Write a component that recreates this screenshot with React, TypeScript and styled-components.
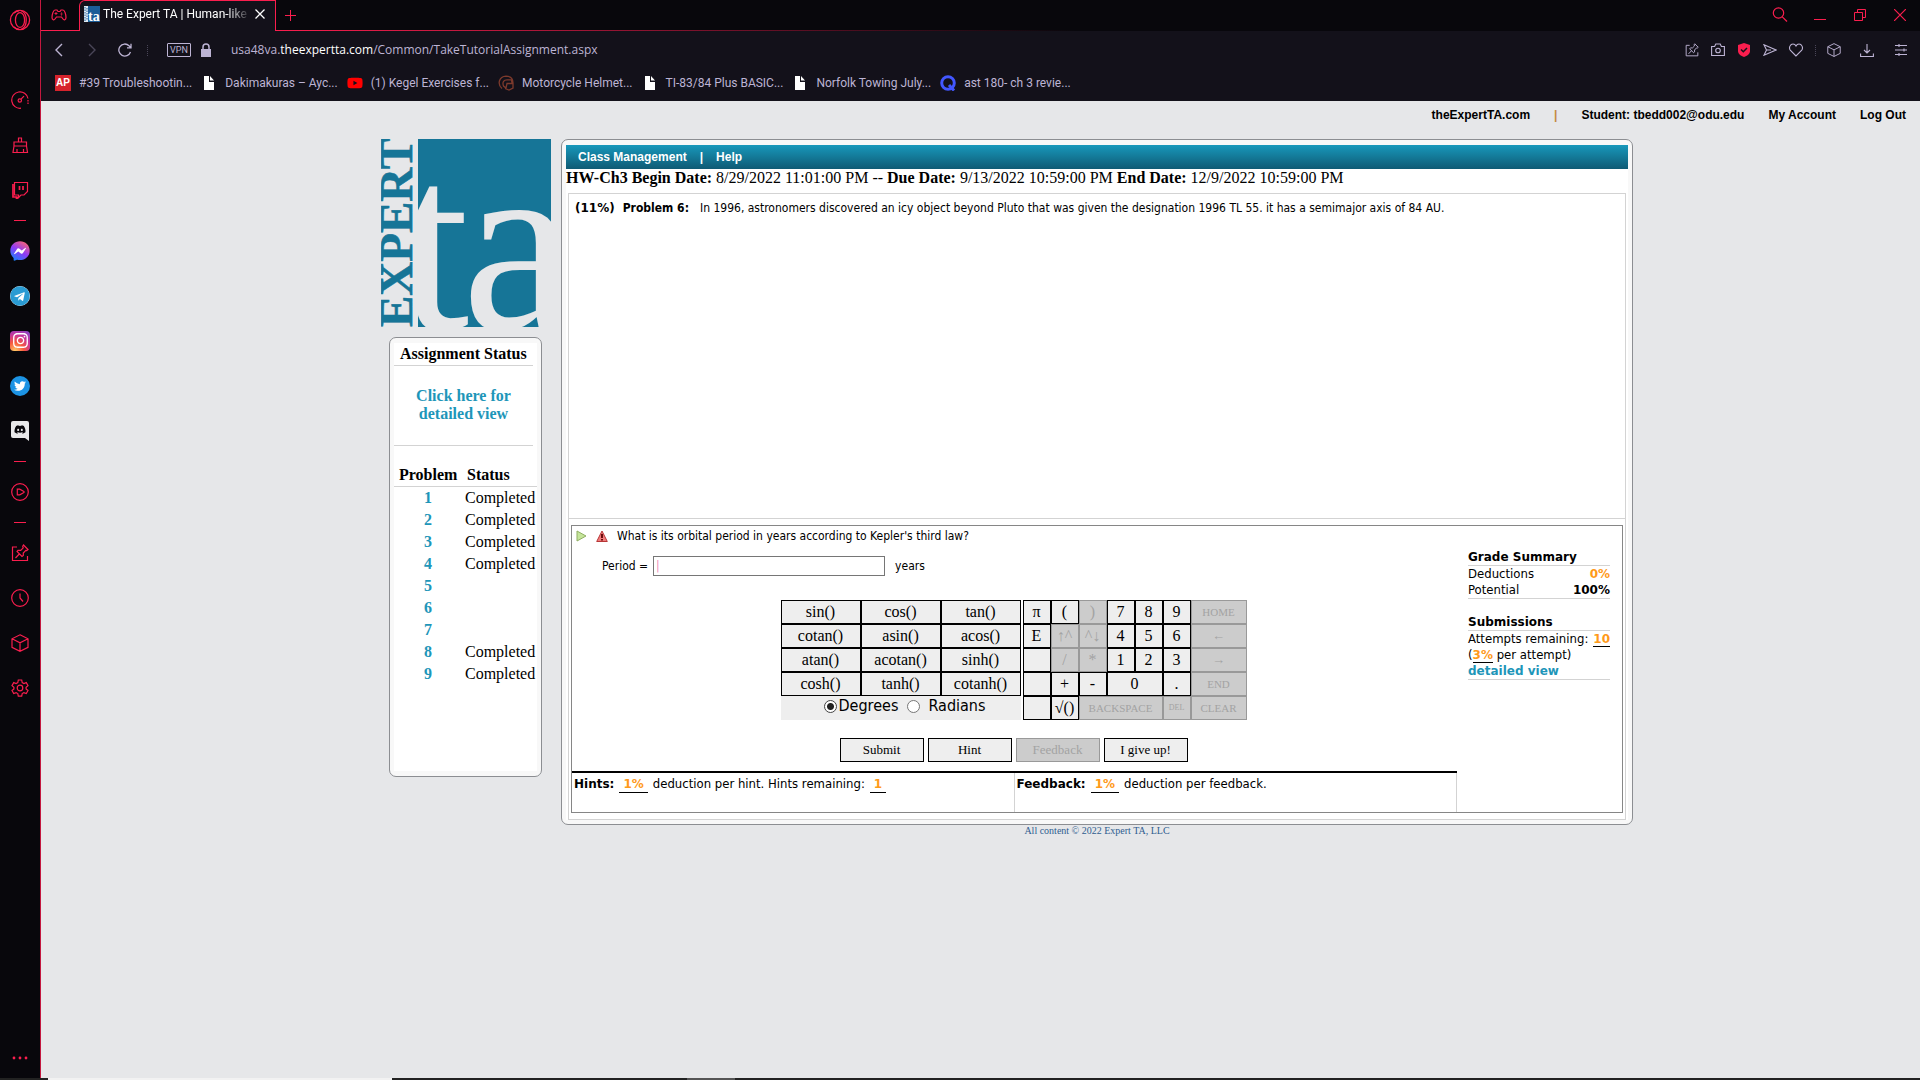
import React from "react";
import styled, { createGlobalStyle, css } from "styled-components";
import {
  FaFacebookMessenger,
  FaTelegram,
  FaTwitter,
  FaDiscord,
  FaInstagram,
  FaYoutube,
} from "react-icons/fa";

const serif = '"Liberation Serif", "Times New Roman", serif';
const arial = '"Liberation Sans", Arial, sans-serif';
const tahoma = '"DejaVu Sans Condensed", Tahoma, "DejaVu Sans", sans-serif';
const verdana = '"DejaVu Sans", Verdana, sans-serif';
const chromeFont = 'Roboto, "Segoe UI", sans-serif';
const addressFont = '"Open Sans", "Segoe UI", sans-serif';

const red = "#fa1e4e";
const lilac = "#bdb4d4";
const pageGray = "#e6e7e9";
const teal = "#1e96b9";
const orange = "#ff9a1a";
const rule = "#d3d3d3";

const GlobalStyle = createGlobalStyle`
  * { box-sizing: border-box; }
  html, body { margin: 0; background: ${pageGray}; }
  button, input { font: inherit; color: inherit; margin: 0; }
  a { text-decoration: none; color: inherit; }
`;

/* ---------- browser shell ---------- */

const Shell = styled.div`
  display: flex;
  flex-direction: column;
  min-height: 100vh;
`;
const Window = styled.div`
  display: flex;
  flex: 1;
`;
const SideBar = styled.nav`
  display: flex;
  flex-direction: column;
  align-items: center;
  width: 41px;
  flex: none;
  background: #08070c;
  border-right: 1px solid #c4183f;
  color: ${red};
  padding-top: 4px;
`;
const IconButton = styled.button<{ $w?: number; $h?: number }>`
  display: flex;
  align-items: center;
  justify-content: center;
  width: ${(p) => p.$w ?? 32}px;
  height: ${(p) => p.$h ?? 32}px;
  flex: none;
  padding: 0;
  border: 0;
  background: none;
  color: inherit;
`;
const SideGroup = styled.div`
  display: flex;
  flex-direction: column;
  align-items: center;
`;
const TopGap = styled.div`
  height: 41px;
`;
const Dash = styled.hr`
  width: 12px;
  height: 1px;
  margin: 8px 0 7px;
  border: 0;
  background: ${red};
`;
const SideEnd = styled.div`
  margin-top: auto;
  padding-bottom: 4px;
`;
const Column = styled.div`
  display: flex;
  flex-direction: column;
  flex: 1;
  min-width: 0;
`;
const TabStrip = styled.header`
  display: flex;
  align-items: stretch;
  height: 31px;
  background: #08070c;
  color: ${red};
`;
const StripLine = styled.div<{ $grow?: boolean; $w?: number }>`
  display: flex;
  align-items: center;
  ${(p) => (p.$grow ? "flex: 1;" : `width: ${p.$w}px;`)}
  border-bottom: 1px solid ${red};
  ${(p) =>
    p.$grow &&
    css`
      border-image: linear-gradient(to right, ${red}, rgba(250, 30, 78, 0) 800px) 1;
    `}
`;
const Tab = styled.div`
  display: flex;
  align-items: center;
  width: 197px;
  padding: 0 6px 4px 4px;
  background: #13111a;
  border: 1px solid ${red};
  border-bottom: 0;
  border-top-left-radius: 6px;
  color: #fff;
`;
const TabTitle = styled.span`
  flex: 1;
  margin-left: 3px;
  overflow: hidden;
  white-space: nowrap;
  font: 12px/16px ${chromeFont};
  -webkit-mask-image: linear-gradient(to right, #000 84%, transparent);
  mask-image: linear-gradient(to right, #000 84%, transparent);
`;
const WindowButtons = styled.div`
  display: flex;
  gap: 8px;
  margin-left: auto;
  padding-right: 4px;
`;
const NavBar = styled.div`
  display: flex;
  align-items: center;
  height: 38px;
  background: #13111a;
  color: ${lilac};
  padding: 0 5px 0 1px;
`;
const Dots = styled.span`
  width: 1px;
  height: 11px;
  margin: 0 5px 0 6px;
  border-left: 1px dotted #4a4658;
`;
const Vpn = styled.button`
  width: 24px;
  height: 14px;
  padding: 0;
  margin: 0 9px 0 14px;
  border: 1px solid ${lilac};
  border-radius: 1px;
  background: none;
  font: 9px/12px ${chromeFont};
  color: ${lilac};
`;
const Address = styled.span`
  flex: 1;
  margin-left: 19px;
  font: 12px/18px ${addressFont};
  b {
    font-weight: 400;
    color: #fff;
  }
`;
const Bookmarks = styled.nav`
  display: flex;
  align-items: center;
  gap: 9px;
  height: 32px;
  padding: 0 0 4px 14px;
  background: #13111a;
  color: ${lilac};
  font: 12px/16px ${chromeFont};
`;
const Bookmark = styled.a`
  display: flex;
  align-items: center;
  gap: 8px;
  white-space: nowrap;
`;
const ApBadge = styled.span`
  width: 16px;
  height: 16px;
  background: #d6232c;
  color: #fff;
  text-align: center;
  font: bold 10px/16px ${arial};
`;
const TaskBar = styled.footer`
  display: flex;
  height: 2px;
  background: #222;
`;
const TaskPart = styled.span<{ $w: number; $bg: string }>`
  width: ${(p) => p.$w}px;
  background: ${(p) => p.$bg};
`;

/* ---------- site ---------- */

const Site = styled.div`
  flex: 1;
  background: ${pageGray};
`;
const UserLinks = styled.nav`
  display: flex;
  justify-content: flex-end;
  gap: 24px;
  padding: 6px 14px 0 0;
  font: bold 12px/16px ${arial};
  color: #000;
`;
const Bar = styled.span`
  color: #c48a3c;
`;
const Page = styled.div`
  display: flex;
  align-items: flex-start;
  max-width: 1305px;
  margin: 16px auto 0;
  padding-left: 53px;
`;
const Left = styled.aside`
  width: 180px;
  flex: none;
`;
const Logo = styled.svg`
  display: block;
  width: 170px;
  height: 188px;
`;
const StatusCard = styled.section`
  width: 153px;
  min-height: 440px;
  margin: 10px 0 0 8px;
  padding: 5px 4px;
  border: 1px solid #8c8e92;
  border-radius: 7px;
  background: #f8f8f8;
  font: 16px/18px ${serif};
  color: #000;
`;
const CardBody = styled.div`
  min-height: 428px;
  background: #fff;
`;
const CardTitle = styled.h2`
  margin: 0 4px 0 0;
  padding: 2px 0 2px 6px;
  border-bottom: 1px solid ${rule};
  font-size: 16px;
  line-height: 18px;
`;
const DetailLink = styled.a`
  display: block;
  margin-right: 4px;
  padding: 21px 16px 22px;
  border-bottom: 1px solid ${rule};
  text-align: center;
  font-weight: bold;
  color: ${teal};
`;
const StatusTable = styled.table`
  width: 100%;
  margin-top: 20px;
  border-collapse: collapse;
  th {
    padding: 0 0 2px 5px;
    text-align: left;
    border-bottom: 1px solid ${rule};
  }
  td {
    height: 22px;
    padding: 0 0 0 3px;
  }
  td:first-child {
    width: 68px;
    padding-left: 0;
    text-align: center;
    font-weight: bold;
    color: ${teal};
  }
`;
const Right = styled.main`
  flex: 1;
  min-width: 0;
`;
const Panel = styled.div`
  padding: 5px 4px 4px;
  border: 1px solid #8c8e92;
  border-radius: 7px;
  background: #f8f8f8;
  color: #000;
`;
const PanelBody = styled.div`
  background: #fff;
`;
const Menu = styled.nav`
  display: flex;
  gap: 13px;
  height: 24px;
  padding-left: 12px;
  background: linear-gradient(#1898bb, #0f5a74);
  color: #fff;
  font: bold 12px/24px ${arial};
`;
const Dates = styled.p`
  margin: 0;
  font: 16px/18px ${serif};
`;
const Work = styled.div`
  margin: 6px 2px 0;
  padding-bottom: 6px;
  border: 1px solid ${rule};
`;
const Problem = styled.section`
  display: flex;
  gap: 8px;
  min-height: 325px;
  padding: 6px;
  border-bottom: 1px solid ${rule};
  font: 12px/16px ${tahoma};
`;
const Strong = styled.b<{ $wide?: boolean }>`
  ${(p) => p.$wide && `font-family: ${verdana};`}
`;
const Statement = styled.span`
  margin-left: 3px;
`;
const Question = styled.section`
  display: flex;
  margin: 6px 2px 0;
  border: 1px solid #868686;
  font: 12px/16px ${tahoma};
`;
const Answer = styled.div`
  display: flex;
  flex-direction: column;
  flex: 1;
  min-width: 0;
`;
const Ask = styled.div`
  display: flex;
  align-items: center;
  gap: 9px;
  padding: 2px 0 0 4px;
`;
const Field = styled.div`
  display: flex;
  align-items: center;
  padding: 12px 0 0 30px;
  input {
    width: 232px;
    height: 20px;
    margin: 0 10px 0 5px;
    padding: 0 2px;
    border: 1px solid #767676;
    background: #fff;
  }
  input::placeholder {
    color: #f08ab8;
    opacity: 1;
  }
`;
const Keypad = styled.div`
  display: flex;
  justify-content: center;
  gap: 2px;
  margin-top: 24px;
  padding-right: 2px;
`;
const Functions = styled.div`
  display: grid;
  grid-template-columns: repeat(3, 80px);
  grid-auto-rows: 24px;
  background: #eee;
`;
const Digits = styled.div`
  display: grid;
  grid-template-columns: repeat(6, 28px) 56px;
  grid-auto-rows: 24px;
`;
const Key = styled.button<{ $span?: number; $size?: number }>`
  padding: 0;
  grid-column: span ${(p) => p.$span ?? 1};
  border: 1px solid #000;
  background: #eee;
  font: ${(p) => p.$size ?? 16}px/20px ${serif};
  color: #000;
  &:disabled {
    border-color: #999;
    background: #ccc;
    color: #a3a3a3;
  }
`;
const Units = styled.div`
  grid-column: span 3;
  display: flex;
  justify-content: center;
  align-items: flex-start;
  gap: 9px;
  padding-left: 8px;
  font: 16px/20px ${tahoma};
  label {
    display: flex;
    align-items: center;
    gap: 2px;
  }
  label + label {
    gap: 8px;
  }
`;
const Radio = styled.input`
  appearance: none;
  width: 13px;
  height: 13px;
  border: 1px solid #767676;
  border-radius: 50%;
  background: #fff;
  &:checked {
    border-color: #444;
    background: radial-gradient(circle, #222 0 3px, #fff 4px);
  }
`;
const Actions = styled.div`
  display: flex;
  justify-content: center;
  gap: 4px;
  margin: 18px 0 9px;
  padding-right: 2px;
`;
const Action = styled(Key)`
  width: 84px;
  height: 24px;
  font-size: 13px;
`;
const Deductions = styled.div`
  display: flex;
  height: 41px;
  border-top: 2px solid #000;
  font: 13px/16px ${tahoma};
`;
const Deduction = styled.div`
  flex: 1;
  padding: 3px 0 0 2px;
  border-right: 1px solid ${rule};
  white-space: nowrap;
  b {
    font-family: ${verdana};
    font-size: 12px;
  }
`;
const Blank = styled.b`
  display: inline-block;
  height: 17px;
  margin: 0 5px;
  padding: 0 4px;
  border-bottom: 1px solid #000;
  color: ${orange};
`;
const Summary = styled.aside`
  width: 165px;
  flex: none;
  padding: 23px 12px 0 11px;
  font: 13px/16px ${tahoma};
`;
const SummaryBlock = styled.section`
  margin-bottom: 15px;
  border-bottom: 1px solid ${rule};
  h3 {
    margin: 0;
    font: bold 12px/16px ${verdana};
    border-bottom: 1px solid ${rule};
  }
`;
const SummaryRow = styled.div`
  display: flex;
  justify-content: space-between;
  height: 16px;
  white-space: nowrap;
`;
const Inline = styled.b`
  border-bottom: 1px solid #000;
  font: bold 12px/16px ${verdana};
  color: ${orange};
`;
const Percent = styled.b<{ $hot?: boolean }>`
  font: bold 12px/16px ${verdana};
  color: ${(p) => (p.$hot ? orange : "#000")};
`;
const AttemptCost = styled.div`
  height: 16px;
`;
const DetailedView = styled.a`
  display: block;
  font: bold 12px/16px ${verdana};
  color: ${teal};
`;
const Copyright = styled.p`
  margin: 0;
  text-align: center;
  font: 10px/12px ${serif};
  color: #2f5d90;
`;

/* ---------- icons ---------- */

type IconProps = { size?: number; children?: React.ReactNode; sw?: number };
const Line = ({ size = 18, sw = 1.2, children }: IconProps) => (
  <svg width={size} height={size} viewBox="0 0 18 18" fill="none" stroke="currentColor" strokeWidth={sw}>
    {children}
  </svg>
);
const OperaIcon = () => (
  <svg width="22" height="22" viewBox="0 0 22 22" fill="none" stroke="currentColor" strokeWidth="1.3">
    <circle cx="11" cy="11" r="9.6" />
    <ellipse cx="11" cy="11" rx="4.6" ry="7.4" />
    <path d="M12 1.5c7 3 7 16 0 19M10 1.5c-3 .6-4 1.4-5 2.7M10 20.500c-3-.6-4-1.400-5-2.700" />
  </svg>
);
const Gamepad = () => (
  <svg width="16" height="12" viewBox="0 0 16 12" fill="none" stroke="currentColor" strokeWidth="1.200">
    <path d="M4 1h2l1 1.500h2L10 1h2c1.500 0 3 4 3 7.500C15 11 13 11.500 12 10L10.500 8h-5L4 10C3 11.500 1 11 1 8.500 1 5 2.500 1 4 1z" />
    <path d="M3.500 4.500h3M5 3v3M10.500 3.500v1M10.500 5.500v1M9.500 5h2" strokeWidth=".9" />
  </svg>
);
const Gauge = () => (
  <Line>
    <path d="M10 17.200A8.200 8.200 0 1 1 17 7.500" />
    <path d="M17 9v5" strokeDasharray="1.500 1" />
    <circle cx="8.800" cy="9.500" r="1.700" />
    <path d="M10 8.200l3-3" />
  </Line>
);
const Broom = () => (
  <Line>
    <path d="M7.500 6V2h3v4M3 6h12.500v4H3zM3 10l-1 6.500h14.500L15.500 10M6 16.500V13M12.500 16.500V13" />
  </Line>
);
const Twitch = () => (
  <Line>
    <path d="M3.500 1.500h13v9l-3.500 3.500h-3l-2.500 2.500V14h-4z" />
    <path d="M2 3v13h3.500v2L8 15.500M8.500 5v4M12 5v4" strokeWidth="1.700" />
  </Line>
);
const PlayCircle = () => (
  <Line>
    <circle cx="9" cy="9" r="8.300" />
    <path d="M6.300 6.200v5.600h2.500L13 9.500V8.500L8.800 6.200z" />
  </Line>
);
const PinBoard = ({ size = 18 }: IconProps) => (
  <Line size={size}>
    <path d="M6 3H1.500v13.500h15V12" />
    <path d="M12.500 1l4.500 4.500-1.200 1-1-.2-2.500 2.700v2.500l-1.300 1L6 7.500l1-1.200h2.700l2.500-2.500-.500-1.500zM8.300 10L4.500 14" />
  </Line>
);
const Clock = () => (
  <Line>
    <circle cx="9" cy="9" r="8.300" />
    <path d="M9 4.500V9l3 3.500" />
  </Line>
);
const Cube = ({ size = 18 }: IconProps) => (
  <Line size={size}>
    <path d="M9 .8l8 4v8.500l-8 4-8-4V4.800zM1 4.800l8 4 8-4M9 8.800v8.500" />
  </Line>
);
const Gear = () => (
  <Line>
    <path d="M7.300 1h3.400l.5 2.500 1.700 1 2.400-.900 1.700 3-1.900 1.600v1.700l1.900 1.600-1.700 3-2.400-.900-1.700 1-.5 2.500H7.300l-.5-2.500-1.700-1-2.400.900-1.700-3 1.900-1.600V8.200L1 6.600l1.700-3 2.400.900 1.700-1z" />
    <circle cx="9" cy="9" r="2.800" />
  </Line>
);
const Messenger = () => (
  <svg width="20" height="20" viewBox="0 0 20 20">
    <defs>
      <linearGradient id="msg" x1="0.2" y1="1" x2="0.8" y2="0">
        <stop offset="0" stopColor="#1684ff" />
        <stop offset=".5" stopColor="#8f3af5" />
        <stop offset="1" stopColor="#ff6670" />
      </linearGradient>
    </defs>
    <FaFacebookMessenger size={20} style={{ fill: "url(#msg)" }} />
  </svg>
);
const MessengerFace = styled.span`
  display: flex;
  border-radius: 50%;
  background: radial-gradient(circle, #fff 7px, transparent 8px);
`;
const Badge = styled.span<{ $bg: string; $r: string }>`
  display: flex;
  align-items: center;
  justify-content: center;
  width: 20px;
  height: 20px;
  border-radius: ${(p) => p.$r};
  background: ${(p) => p.$bg};
`;
const Discord = () => (
  <svg width="18" height="20" viewBox="0 0 18 20">
    <path d="M2 0h14a2 2 0 0 1 2 2v18l-4-3H2a2 2 0 0 1-2-2V2a2 2 0 0 1 2-2z" fill="#e8e8ea" />
    <FaDiscord x="3" y="2.500" size={12} color="#08070c" />
  </svg>
);
const PageIcon = () => (
  <svg width="16" height="16" viewBox="0 0 16 16" fill="#fff">
    <path d="M3 1h5v6h5v8H3z" />
    <path d="M9 1L13 5.500H9z" />
  </svg>
);
const Helmet = () => (
  <svg width="16" height="16" viewBox="0 0 16 16" fill="none" stroke="#7d3a2c" strokeWidth="1.300">
    <path d="M4 13.500C-1 9 1 1.500 8 1.200c5 0 7 3 7 6.800v5l-4 2-4-1.500M5.500 11C4 7 6 4.800 9 4.800h4.500L14 8.500H9L8 13z" />
  </svg>
);
const Quizlet = () => (
  <svg width="16" height="16" viewBox="0 0 16 16" fill="none" stroke="#4257ff" strokeWidth="3">
    <circle cx="8" cy="8" r="6.300" />
    <path d="M9 10l5 5.500" />
  </svg>
);
const Favicon = () => (
  <svg width="16" height="16" viewBox="0 0 16 16">
    <rect width="16" height="16" fill="#1c5c97" />
    <rect width="4" height="16" fill="#dfe8f0" />
    <path d="M1 1v14M3 2v12" stroke="#1c5c97" strokeDasharray="1.500 1" />
    <text x="4" y="15" fontFamily="Liberation Serif" fontWeight="bold" fontSize="14" fill="#fff">ta</text>
  </svg>
);
const ExpertLogo = () => (
  <Logo viewBox="0 0 170 188" role="img" aria-label="Expert TA">
    <rect x="37" width="133" height="188" fill="#167597" />
    <g fontFamily="Liberation Serif" fontSize="253" fill={pageGray}>
      <text x="18" y="190">t</text>
      <text x="81" y="190">a</text>
    </g>
    <text
      transform="translate(31 188) rotate(-90)"
      fontFamily="Liberation Serif"
      fontWeight="bold"
      fontSize="47"
      fill="#167597"
      stroke="#167597"
      strokeWidth=".6"
    >
      EXPERT
    </text>
  </Logo>
);
const GreenPlay = () => (
  <svg width="11" height="12" viewBox="0 0 11 12">
    <path d="M1 1l9 5-9 5z" fill="#c5e59a" stroke="#8fae62" strokeLinejoin="round" />
  </svg>
);
const Warning = () => (
  <svg width="12" height="13" viewBox="0 0 12 13">
    <path d="M6 1l5.300 10.500H.7z" fill="#f07b7b" stroke="#b73636" strokeLinejoin="round" />
    <path d="M6 4v4M6 9v1.500" stroke="#5c0000" strokeWidth="1.800" />
  </svg>
);

/* ---------- data ---------- */

const bookmarks: [React.ReactNode, string][] = [
  [<ApBadge key="i">AP</ApBadge>, "#39 Troubleshootin..."],
  [<PageIcon key="i" />, "Dakimakuras – Ayc..."],
  [<FaYoutube key="i" size={16} color="#f00" />, "(1) Kegel Exercises f..."],
  [<Helmet key="i" />, "Motorcycle Helmet..."],
  [<PageIcon key="i" />, "TI-83/84 Plus BASIC..."],
  [<PageIcon key="i" />, "Norfolk Towing July..."],
  [<Quizlet key="i" />, "ast 180- ch 3 revie..."],
];
const statuses = [1, 1, 1, 1, 0, 0, 0, 1, 1];
const functions = [
  "sin()", "cos()", "tan()", "cotan()", "asin()", "acos()",
  "atan()", "acotan()", "sinh()", "cosh()", "tanh()", "cotanh()",
];
type K = { t: string; off?: boolean; span?: number; size?: number };
const on = (t: string, span = 1): K => ({ t, span });
const off = (t: string, size = 16, span = 1): K => ({ t, off: true, size, span });
const keys: K[] = [
  on("π"), on("("), off(")"), on("7"), on("8"), on("9"), off("HOME", 11),
  on("E"), off("↑^"), off("^↓"), on("4"), on("5"), on("6"), off("←", 13),
  on(""), off("/"), off("*"), on("1"), on("2"), on("3"), off("→", 13),
  on(""), on("+"), on("-"), on("0", 2), on("."), off("END", 11),
  on(""), on("√()"), off("BACKSPACE", 11, 3), off("DEL", 8), off("CLEAR", 11),
];

export default function App() {
  return (
    <Shell>
      <GlobalStyle />
      <Window>
        <SideBar>
          <IconButton aria-label="Opera"><OperaIcon /></IconButton>
          <TopGap />
          <SideGroup>
            <IconButton $h={45} aria-label="GX Control"><Gauge /></IconButton>
            <IconButton $h={45} aria-label="GX Cleaner"><Broom /></IconButton>
            <IconButton $h={45} aria-label="Twitch"><Twitch /></IconButton>
            <Dash />
            <IconButton $h={45} aria-label="Messenger"><MessengerFace><Messenger /></MessengerFace></IconButton>
            <IconButton $h={45} aria-label="Telegram">
              <Badge $bg="#fff" $r="50%"><FaTelegram size={20} color="#2a9bd3" /></Badge>
            </IconButton>
            <IconButton $h={45} aria-label="Instagram">
              <Badge $bg="radial-gradient(circle at 25% 100%, #fc6, #f7583d 35%, #c8359b 65%, #7a46cf)" $r="4px">
                <FaInstagram size={17} color="#fff" />
              </Badge>
            </IconButton>
            <IconButton $h={45} aria-label="Twitter">
              <Badge $bg="#1c93e4" $r="50%"><FaTwitter size={12} color="#fff" /></Badge>
            </IconButton>
            <IconButton $h={45} aria-label="Discord"><Discord /></IconButton>
            <Dash />
            <IconButton $h={45} aria-label="Player"><PlayCircle /></IconButton>
            <Dash />
            <IconButton $h={45} aria-label="Pinboards"><PinBoard /></IconButton>
            <IconButton $h={45} aria-label="History"><Clock /></IconButton>
            <IconButton $h={45} aria-label="Extensions"><Cube /></IconButton>
            <IconButton $h={45} aria-label="Settings"><Gear /></IconButton>
          </SideGroup>
          <SideEnd>
            <IconButton aria-label="More">
              <svg width="16" height="4" viewBox="0 0 16 4" fill="currentColor">
                <circle cx="2" cy="2" r="1.400" /><circle cx="8" cy="2" r="1.400" /><circle cx="14" cy="2" r="1.400" />
              </svg>
            </IconButton>
          </SideEnd>
        </SideBar>
        <Column>
          <TabStrip>
            <StripLine $w={38}>
              <IconButton $w={36} $h={30} aria-label="GX Corner"><Gamepad /></IconButton>
            </StripLine>
            <Tab>
              <Favicon />
              <TabTitle>The Expert TA | Human-like</TabTitle>
              <IconButton $w={18} $h={18} aria-label="Close tab">
                <svg width="10" height="10" viewBox="0 0 10 10" stroke="currentColor" strokeWidth="1.300"><path d="M.5.500l9 9M9.500.500l-9 9" /></svg>
              </IconButton>
            </Tab>
            <StripLine $grow>
              <IconButton $w={28} $h={28} aria-label="New tab">
                <svg width="11" height="11" viewBox="0 0 11 11" stroke="currentColor"><path d="M5.500 0v11M0 5.500h11" /></svg>
              </IconButton>
              <WindowButtons>
                <IconButton aria-label="Search tabs">
                  <svg width="16" height="16" viewBox="0 0 16 16" fill="none" stroke="currentColor" strokeWidth="1.200"><circle cx="6.500" cy="6" r="5.200" /><path d="M10.300 9.800l4.700 4.700" /></svg>
                </IconButton>
                <IconButton aria-label="Minimize">
                  <svg width="12" height="12" viewBox="0 0 12 12" stroke="currentColor"><path d="M0 10.500h12" /></svg>
                </IconButton>
                <IconButton aria-label="Restore">
                  <svg width="12" height="12" viewBox="0 0 12 12" fill="none" stroke="currentColor"><path d="M.5 3.500h8v8h-8zM3.500 3.500v-3h8v8h-3" /></svg>
                </IconButton>
                <IconButton aria-label="Close">
                  <svg width="12" height="12" viewBox="0 0 12 12" stroke="currentColor" strokeWidth="1.200"><path d="M0 0l12 12M12 0L0 12" /></svg>
                </IconButton>
              </WindowButtons>
            </StripLine>
          </TabStrip>
          <NavBar>
            <IconButton $w={33} aria-label="Back">
              <svg width="8" height="14" viewBox="0 0 8 14" fill="none" stroke="currentColor" strokeWidth="1.400"><path d="M7 1L1 7l6 6" /></svg>
            </IconButton>
            <IconButton $w={33} aria-label="Forward">
              <svg width="8" height="14" viewBox="0 0 8 14" fill="none" stroke="#4a4658" strokeWidth="1.400"><path d="M1 1l6 6-6 6" /></svg>
            </IconButton>
            <IconButton $w={33} aria-label="Reload">
              <svg width="14" height="14" viewBox="0 0 14 14" fill="none" stroke="currentColor" strokeWidth="1.300"><path d="M12.500 9A6 6 0 1 1 11 2.700L13 4.800M13 .8v4H9" /></svg>
            </IconButton>
            <Dots />
            <Vpn>VPN</Vpn>
            <svg width="12" height="14" viewBox="0 0 12 14" fill={lilac}><path d="M1 6h10v8H1z" /><path d="M3 7V4a3 3 0 0 1 6 0v3" fill="none" stroke={lilac} strokeWidth="1.500" /></svg>
            <Address>usa48va.<b>theexpertta.com</b>/Common/TakeTutorialAssignment.aspx</Address>
            <IconButton $w={26} aria-label="Save to pinboard"><PinBoard size={14} /></IconButton>
            <IconButton $w={26} aria-label="Snapshot">
              <svg width="14" height="14" viewBox="0 0 14 14" fill="none" stroke="currentColor" strokeWidth="1.100"><path d="M.6 3.500h3l1.200-2.500h4.400l1.200 2.500h3v9H.6z" /><circle cx="7" cy="7.500" r="2.300" /></svg>
            </IconButton>
            <IconButton $w={26} aria-label="Ad blocker">
              <svg width="12" height="14" viewBox="0 0 12 14"><path d="M6 0l6 2v6c0 3-3 5-6 6-3-1-6-3-6-6V2z" fill={red} /><path d="M3 6.500l2.300 2.300L9 5" fill="none" stroke="#13111a" strokeWidth="1.500" /></svg>
            </IconButton>
            <IconButton $w={26} aria-label="Send to My Flow">
              <svg width="14" height="12" viewBox="0 0 14 12" fill="none" stroke="currentColor" strokeWidth="1.100"><path d="M1 .8L13 6 1 11.200 3.500 6zM3.500 6H8" /></svg>
            </IconButton>
            <IconButton $w={26} aria-label="Bookmark page">
              <svg width="14" height="14" viewBox="0 0 14 14" fill="none" stroke="currentColor" strokeWidth="1.100"><path d="M7 13L1.500 7.500C-.8 4.500 1.500 1 4 1c1.500 0 2.500 1 3 2 .5-1 1.500-2 3-2 2.500 0 4.800 3.500 2.500 6.500z" /></svg>
            </IconButton>
            <Dots />
            <IconButton $w={26} aria-label="Extensions menu"><Cube size={14} /></IconButton>
            <IconButton $w={40} aria-label="Downloads">
              <svg width="14" height="13" viewBox="0 0 14 13" fill="none" stroke="currentColor" strokeWidth="1.100"><path d="M7 0v9M4 6l3 3 3-3M.6 9.500v3h12.800v-3" /></svg>
            </IconButton>
            <IconButton $w={28} aria-label="Easy setup">
              <svg width="12" height="12" viewBox="0 0 12 12" stroke="currentColor" strokeWidth="1.100"><path d="M0 1.500h12M0 6h12M0 10.500h12M4 0v3M9 4.500v3M4 9v3" /></svg>
            </IconButton>
          </NavBar>
          <Bookmarks>
            {bookmarks.map(([icon, label]) => (
              <Bookmark href="#" key={label}>{icon}<span>{label}</span></Bookmark>
            ))}
          </Bookmarks>

          <Site>
            <UserLinks>
              <a href="#">theExpertTA.com</a>
              <Bar>|</Bar>
              <span>Student: tbedd002@odu.edu</span>
              <a href="#">My Account</a>
              <a href="#">Log Out</a>
            </UserLinks>
            <Page>
              <Left>
                <ExpertLogo />
                <StatusCard>
                  <CardBody>
                    <CardTitle>Assignment Status</CardTitle>
                    <DetailLink href="#">Click here for detailed view</DetailLink>
                    <StatusTable>
                      <thead><tr><th>Problem</th><th>Status</th></tr></thead>
                      <tbody>
                        {statuses.map((done, i) => (
                          <tr key={i}>
                            <td><a href="#">{i + 1}</a></td>
                            <td>{done ? "Completed" : ""}</td>
                          </tr>
                        ))}
                      </tbody>
                    </StatusTable>
                  </CardBody>
                </StatusCard>
              </Left>
              <Right>
                <Panel>
                  <PanelBody>
                    <Menu><a href="#">Class Management</a><span>|</span><a href="#">Help</a></Menu>
                    <Dates>
                      <b>HW-Ch3 Begin Date:</b> 8/29/2022 11:01:00 PM -- <b>Due Date:</b> 9/13/2022 10:59:00 PM <b>End Date:</b> 12/9/2022 10:59:00 PM
                    </Dates>
                    <Work>
                      <Problem>
                        <Strong $wide>(11%)</Strong>
                        <Strong>Problem 6:</Strong>
                        <Statement>
                          In 1996, astronomers discovered an icy object beyond Pluto that was given the designation 1996 TL 55. it has a semimajor axis of 84 AU.
                        </Statement>
                      </Problem>
                      <Question>
                        <Answer>
                          <Ask>
                            <GreenPlay />
                            <Warning />
                            <span>What is its orbital period in years according to Kepler's third law?</span>
                          </Ask>
                          <Field>
                            <label htmlFor="period">Period =</label>
                            <input id="period" type="text" placeholder="|" />
                            <span>years</span>
                          </Field>
                          <Keypad>
                            <Functions>
                              {functions.map((f) => <Key key={f}>{f}</Key>)}
                              <Units>
                                <label><Radio type="radio" name="unit" defaultChecked />Degrees</label>
                                <label><Radio type="radio" name="unit" />Radians</label>
                              </Units>
                            </Functions>
                            <Digits>
                              {keys.map((k, i) => (
                                <Key key={i} $span={k.span} $size={k.size} disabled={k.off}>{k.t}</Key>
                              ))}
                            </Digits>
                          </Keypad>
                          <Actions>
                            <Action>Submit</Action>
                            <Action>Hint</Action>
                            <Action disabled>Feedback</Action>
                            <Action>I give up!</Action>
                          </Actions>
                          <Deductions>
                            <Deduction><b>Hints:</b><Blank>1%</Blank>deduction per hint. Hints remaining:<Blank>1</Blank></Deduction>
                            <Deduction><b>Feedback:</b><Blank>1%</Blank>deduction per feedback.</Deduction>
                          </Deductions>
                        </Answer>
                        <Summary>
                          <SummaryBlock>
                            <h3>Grade Summary</h3>
                            <SummaryRow><span>Deductions</span><Percent $hot>0%</Percent></SummaryRow>
                            <SummaryRow><span>Potential</span><Percent>100%</Percent></SummaryRow>
                          </SummaryBlock>
                          <SummaryBlock>
                            <h3>Submissions</h3>
                            <SummaryRow><span>Attempts remaining:</span><Inline>10</Inline></SummaryRow>
                            <AttemptCost>(<Inline>3%</Inline> per attempt)</AttemptCost>
                            <DetailedView href="#">detailed view</DetailedView>
                          </SummaryBlock>
                        </Summary>
                      </Question>
                    </Work>
                  </PanelBody>
                </Panel>
                <Copyright>All content © 2022 Expert TA, LLC</Copyright>
              </Right>
            </Page>
          </Site>
        </Column>
      </Window>
      <TaskBar>
        <TaskPart $w={48} $bg="#222" />
        <TaskPart $w={344} $bg="#f2f2f2" />
        <TaskPart $w={295} $bg="#222" />
        <TaskPart $w={48} $bg="#555" />
      </TaskBar>
    </Shell>
  );
}
